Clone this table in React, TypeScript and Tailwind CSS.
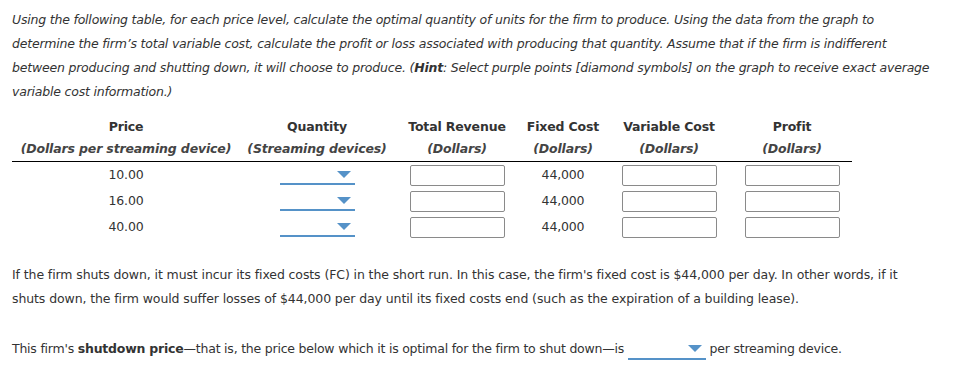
const rows = ["10.00", "16.00", "40.00"];

const Caret = () => (
  <svg width="14" height="7" viewBox="0 0 14 7" className="block">
    <path d="M0 0 H14 L7 7 Z" fill="#5592c8" />
  </svg>
);

const Dropdown = ({ width }: { width: string }) => (
  <span className={`inline-flex ${width} h-[20px] items-center justify-end border-b-2 border-[#5592c8] pr-[4px] align-middle`}>
    <Caret />
  </span>
);

const Box = () => (
  <div className="mx-auto h-[21px] w-[95px] rounded-[2px] border border-[#8a8a8a] bg-white" />
);

const Cell = ({ children }: { children?: React.ReactNode }) => (
  <td className="p-0">
    <div className="flex h-[26px] items-center justify-center">{children}</div>
  </td>
);

export default function App() {
  return (
    <div className="min-h-screen w-[954px] bg-white px-[12px] pt-[8px] text-[12.5px] text-[#333] [font-family:'DejaVu_Sans',Verdana,sans-serif]">
      <p className="whitespace-nowrap italic leading-[24px] tracking-[-0.2px]">
        Using the following table, for each price level, calculate the optimal quantity of units for the firm to produce. Using the data from the graph to
        <br />
        determine the firm’s total variable cost, calculate the profit or loss associated with producing that quantity. Assume that if the firm is indifferent
        <br />
        between producing and shutting down, it will choose to produce. (<b>Hint</b>: Select purple points [diamond symbols] on the graph to receive exact average
        <br />
        variable cost information.)
      </p>

      <table className="mt-[12px] w-[840px] table-fixed border-collapse tracking-[-0.15px]">
        <colgroup>
          <col className="w-[228px]" />
          <col className="w-[154px]" />
          <col className="w-[126px]" />
          <col className="w-[86px]" />
          <col className="w-[126px]" />
          <col className="w-[120px]" />
        </colgroup>
        <thead>
          <tr className="font-bold leading-[22px]">
            <th className="p-0">Price</th>
            <th className="p-0">Quantity</th>
            <th className="p-0">Total Revenue</th>
            <th className="p-0">Fixed Cost</th>
            <th className="p-0">Variable Cost</th>
            <th className="p-0">Profit</th>
          </tr>
          <tr className="border-b border-black font-bold italic leading-[22px] text-[#444]">
            <th className="whitespace-nowrap p-0 pb-[1px]">(Dollars per streaming device)</th>
            <th className="whitespace-nowrap p-0 pb-[1px]">(Streaming devices)</th>
            <th className="p-0 pb-[1px]">(Dollars)</th>
            <th className="p-0 pb-[1px]">(Dollars)</th>
            <th className="p-0 pb-[1px]">(Dollars)</th>
            <th className="p-0 pb-[1px]">(Dollars)</th>
          </tr>
        </thead>
        <tbody>
          {rows.map((p) => (
            <tr key={p}>
              <Cell>{p}</Cell>
              <Cell>
                <Dropdown width="w-[75px]" />
              </Cell>
              <Cell>
                <Box />
              </Cell>
              <Cell>44,000</Cell>
              <Cell>
                <Box />
              </Cell>
              <Cell>
                <Box />
              </Cell>
            </tr>
          ))}
        </tbody>
      </table>

      <p className="mt-[23px] whitespace-nowrap leading-[24px] tracking-[-0.1px]">
        If the firm shuts down, it must incur its fixed costs (FC) in the short run. In this case, the firm's fixed cost is $44,000 per day. In other words, if it
        <br />
        shuts down, the firm would suffer losses of $44,000 per day until its fixed costs end (such as the expiration of a building lease).
      </p>

      <p className="mt-[26px] whitespace-nowrap leading-[24px] tracking-[-0.22px]">
        This firm's <b>shutdown price</b>—that is, the price below which it is optimal for the firm to shut down—is{" "}
        <Dropdown width="w-[78px]" /> per streaming device.
      </p>
    </div>
  );
}
